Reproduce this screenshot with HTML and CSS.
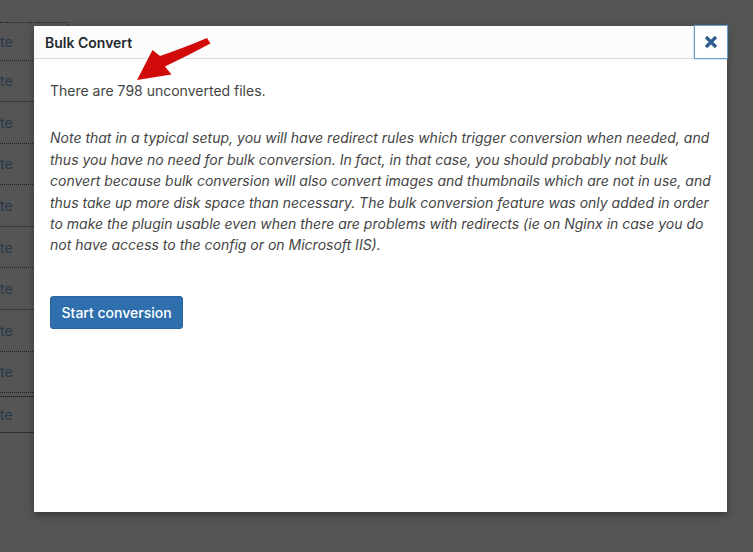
FILE: index.html
```html
<!DOCTYPE html>
<html lang="en">
<head>
<meta charset="utf-8">
<title>Bulk Convert</title>
<link rel="stylesheet" href="styles.css">
</head>
<body>
<div class="page">
  <div class="rows">
    <div class="row first">te</div>
    <div class="row">te</div>
    <div class="row">te</div>
    <div class="row">te</div>
    <div class="row">te</div>
    <div class="row">te</div>
    <div class="row">te</div>
    <div class="row">te</div>
    <div class="row">te</div>
    <div class="row last">te</div>
  </div>

  <div class="dialog">
    <div class="dialog-header">
      <span class="dialog-title">Bulk Convert</span>
      <button class="close" aria-label="Close">
        <svg width="14" height="14" viewBox="0 0 14 14"><path d="M2 2 L12 12 M12 2 L2 12" stroke="#2d5e8e" stroke-width="3.2" stroke-linecap="butt"/></svg>
      </button>
    </div>
    <div class="dialog-body">
      <p class="count">There are 798 unconverted files.</p>
      <p class="note">Note that in a typical setup, you will have redirect rules which trigger conversion when needed, and thus you have no need for bulk conversion. In fact, in that case, you should probably not bulk convert because bulk conversion will also convert images and thumbnails which are not in use, and thus take up more disk space than necessary. The bulk conversion feature was only added in order to make the plugin usable even when there are problems with redirects (ie on Nginx in case you do not have access to the config or on Microsoft IIS).</p>
      <div class="actions"><button class="primary">Start conversion</button></div>
    </div>
  </div>

  <svg class="arrow" width="90" height="60" viewBox="130 30 90 60">
    <path d="M207,38 Q186,47 160,56 L152.5,50 L137,80 L171.5,74.5 L165,66.5 Q189,55 210.5,43.5 Z" fill="#d10a0a"/>
  </svg>
</div>
</body>
</html>
```

FILE: styles.css
```css
* { box-sizing: border-box; }
html, body { margin: 0; padding: 0; }
body {
  width: 753px;
  height: 552px;
  overflow: hidden;
  background: #555555;
  font-family: Inter, "Noto Sans", "Liberation Sans", sans-serif;
}
.page {
  position: relative;
  width: 753px;
  height: 552px;
}
.rows {
  position: absolute;
  left: 0;
  top: 22px;
  width: 68px;
  border-top: 1px dotted #1e1e1e;
  border-right: 1px dotted #1e1e1e;
}
.row {
  height: 41.6px;
  display: flex;
  align-items: center;
  font-size: 14px;
  color: #26394b;
  border-bottom: 1px dotted #1e1e1e;
}
.row.first { height: 37.5px; }
.row.last {
  border-top: 1px solid #2b2b2b;
  border-bottom: 1px solid #2b2b2b;
  height: 37px;
  margin-top: 3px;
}

.dialog {
  position: absolute;
  left: 34px;
  top: 26px;
  width: 693px;
  height: 486px;
  background: #ffffff;
  box-shadow: 0 3px 8px rgba(0,0,0,0.35);
  display: flex;
  flex-direction: column;
}
.dialog-header {
  height: 33px;
  background: #fcfcfc;
  border-bottom: 1px solid #dddddd;
  display: flex;
  align-items: center;
  justify-content: space-between;
  padding-left: 11px;
  position: relative;
}
.dialog-title {
  font-size: 14px;
  font-weight: 600;
  color: #23282d;
}
.close {
  position: absolute;
  right: -1px;
  top: -1px;
  width: 34px;
  height: 34px;
  background: #ffffff;
  border: 1px solid #6a9bc7;
  box-shadow: 0 0 2px rgba(30,140,190,.5);
  padding: 0;
  display: flex;
  align-items: center;
  justify-content: center;
  cursor: pointer;
}
.dialog-body {
  padding: 21px 16px 0 16px;
  display: flex;
  flex-direction: column;
}
.count {
  margin: 0;
  font-size: 14px;
  line-height: 21.4px;
  color: #444444;
}
.note {
  margin: 26px 0 0 0;
  font-size: 14px;
  line-height: 21.4px;
  font-style: italic;
  color: #444444;
}
.actions { margin-top: 40px; }
.primary {
  height: 33px;
  padding: 0 10.5px;
  background: #2f6fae;
  border: 1px solid #2a65a0;
  border-radius: 3px;
  color: #ffffff;
  font-family: inherit;
  font-size: 14px;
  font-weight: 500;
  cursor: pointer;
}
.arrow {
  position: absolute;
  left: 130px;
  top: 30px;
}
```
